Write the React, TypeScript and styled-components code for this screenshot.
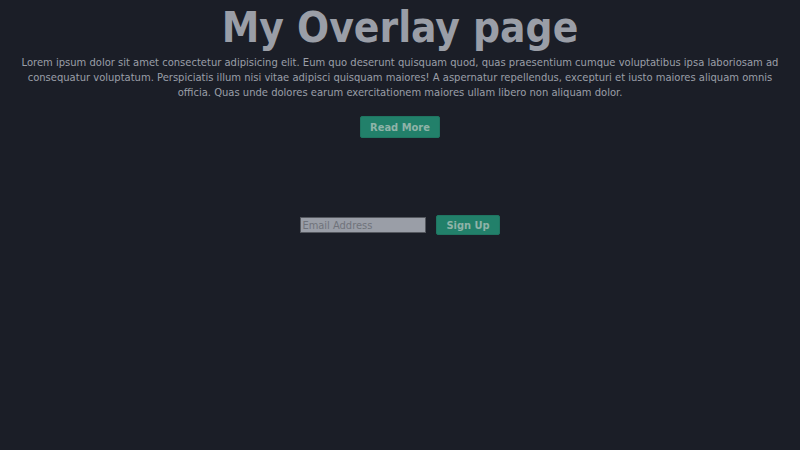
import React from 'react';
import styled, { createGlobalStyle } from 'styled-components';

const GlobalStyle = createGlobalStyle`
    html, body {
        margin: 0;
        padding: 0;
        background-color: #1b1e27;
    }
    body {
        font-family: "DejaVu Sans Condensed", "DejaVu Sans", sans-serif;
        font-stretch: condensed;
        color: #9a9ea7;
        min-height: 450px;
    }
    button, input {
        font-family: inherit;
        font-stretch: inherit;
    }
`;

export default function App() {
    return (<Page>
        <GlobalStyle />
        <Hero>
            <Title>My Overlay page</Title>
            <Lead>
                Lorem ipsum dolor sit amet consectetur adipisicing elit. Eum quo deserunt quisquam quod, quas praesentium cumque voluptatibus ipsa laboriosam ad consequatur voluptatum. Perspiciatis illum nisi vitae adipisci quisquam maiores! A aspernatur repellendus, excepturi et iusto maiores aliquam omnis officia. Quas unde dolores earum exercitationem maiores ullam libero non aliquam dolor.
            </Lead>
            <Button>Read More</Button>
        </Hero>
        <SignupForm onSubmit={(e) => e.preventDefault()}>
            <EmailInput type="email" placeholder="Email Address" />
            <Button type="submit">Sign Up</Button>
        </SignupForm>
    </Page>);
}

const Page = styled.div`
    display: flex;
    flex-direction: column;
    align-items: center;
    padding: 0 20px;
`;

const Hero = styled.section`
    display: flex;
    flex-direction: column;
    align-items: center;
    text-align: center;
`;

const Title = styled.h1`
    margin: 6px 0 0;
    font-size: 42px;
    font-weight: bold;
    line-height: 44px;
    color: #9a9ea7;
`;

const Lead = styled.p`
    margin: 5px 0 0;
    font-size: 11.1px;
    line-height: 15px;
    color: #9a9ea7;
`;

const Button = styled.button`
    font-size: 11px;
    font-weight: bold;
    color: #8fb3a8;
    background-color: #22806a;
    border: 1px solid #1f7561;
    border-radius: 2px;
    padding: 0 9px;
    height: 22px;
    cursor: pointer;
    margin-top: 16px;
`;

const SignupForm = styled.form`
    display: flex;
    align-items: center;
    gap: 10px;
    margin-top: 77px;
    ${Button} {
        margin-top: 0;
        height: 20px;
    }
`;

const EmailInput = styled.input`
    width: 126px;
    height: 16px;
    box-sizing: border-box;
    padding: 0 1px;
    font-size: 11px;
    background-color: #9a9ea7;
    color: #3b3f48;
    border: 1px solid #55585f;
    &::placeholder {
        color: #70737b;
    }
`;
